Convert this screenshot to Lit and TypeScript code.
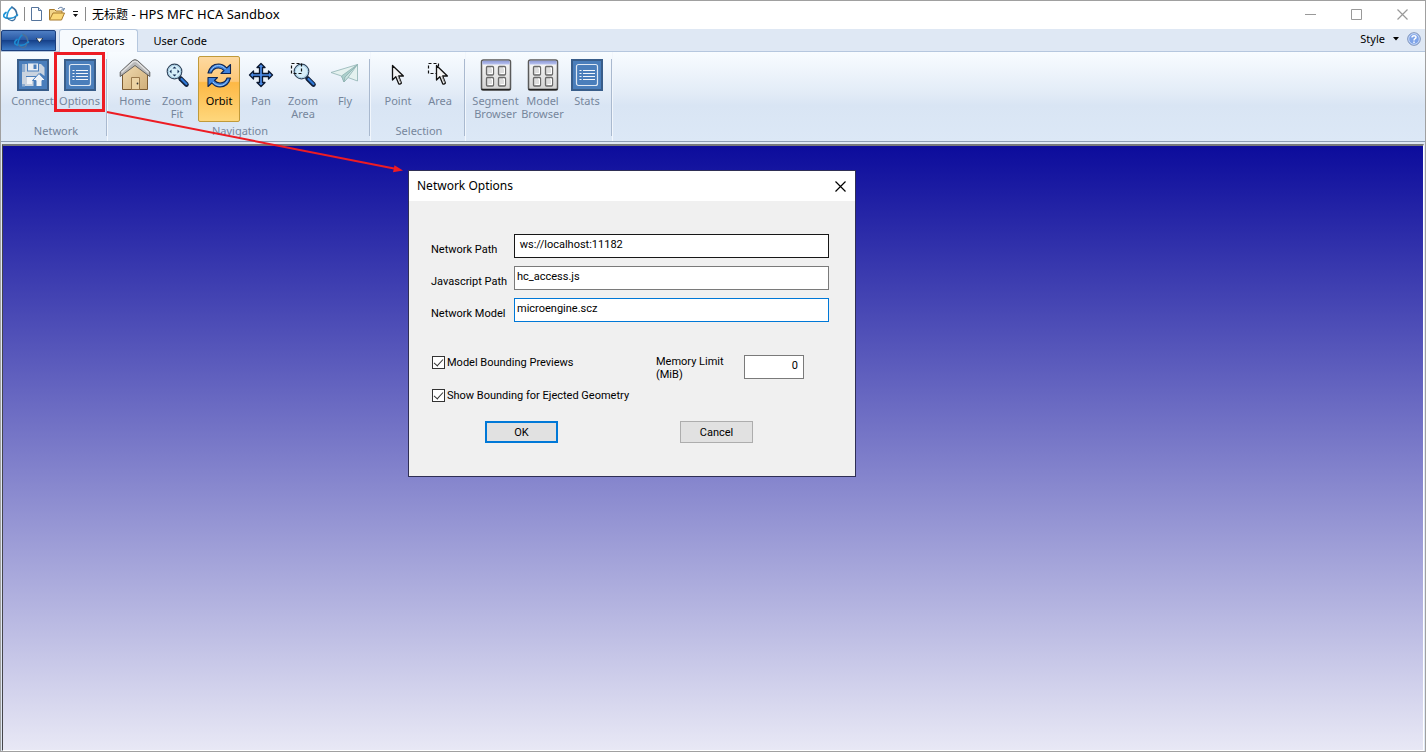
import { LitElement, html, css, svg, nothing } from "lit";
import { customElement, property } from "lit/decorators.js";
import { classMap } from "lit/directives/class-map.js";

const logo = (a: string, b: string) => svg`
  <svg width="16" height="16" viewBox="0 0 16 16" fill="none" stroke-linecap="round">
    <path d="M9 1.200C6.500 3 4.300 6.500 3.800 11.500" stroke=${a} stroke-width="1.500"/>
    <path d="M9 1.200c2.800 1.200 4.800 4.500 5 8.300" stroke=${b} stroke-width="1.700"/>
    <path d="M3 6.500C.8 8 .2 9.800 1.200 11c2 2.300 9.300 2 13.300-2" stroke=${a} stroke-width="1.700"/>
    <path d="M4.500 12c1.200 2 3.500 2.900 5.500 2.500 1.400-.6 2.300-2 2.700-3.700" stroke=${b} stroke-width="1.300"/>
  </svg>`;

const panelFrame = svg`
  <rect x="1" y="1" width="30" height="30" fill="#4a7ebb" stroke="#385d8a" stroke-width="2"/>`;

const listIcon = svg`
  <svg width="32" height="32" viewBox="0 0 32 32">
    ${panelFrame}
    <rect x="5.500" y="5.500" width="21" height="21" rx="2" fill="none" stroke="#dfe8f3" stroke-width="1.200"/>
    <path d="M12 11.500h12M12 14.500h12M12 17.500h12M12 20.500h12" stroke="#f2f6fb" stroke-width="1"/>
    <path d="M8.500 11.500h2M8.500 14.500h2M8.500 17.500h2M8.500 20.500h2" stroke="#f2f6fb" stroke-width="1"/>
  </svg>`;

const browserIcon = svg`
  <svg width="32" height="32" viewBox="0 0 32 32">
    <defs>
      <linearGradient id="wb" x1="0" y1="0" x2="0" y2="1">
        <stop offset="0" stop-color="#fafafa"/><stop offset="1" stop-color="#d2d2d2"/>
      </linearGradient>
      <linearGradient id="wt" x1="0" y1="0" x2="0" y2="1">
        <stop offset="0" stop-color="#8e9ad6"/><stop offset="1" stop-color="#b9c3f0"/>
      </linearGradient>
    </defs>
    <rect x="1.500" y="1" width="29" height="30" rx="2" fill="url(#wb)" stroke="#5a5a5a" stroke-width="1.500"/>
    <path d="M1.500 30.500h29" stroke="#222" stroke-width="1.500"/>
    <path d="M2.300 5.500V3q0-1.300 1.300-1.300h24.800q1.300 0 1.300 1.300v2.500z" fill="url(#wt)"/>
    ${[[6.5, 7.5], [18.5, 7.5], [6.5, 18.5], [18.5, 18.5]].map(
      ([x, y]) => svg`
        <rect x=${x} y=${y} width="7" height="8.500" rx="1" fill="#dedede" stroke="#6a6a6a" stroke-width="1.300"/>
        <path d="M${x + 4.5} ${y + 1.5}h1.500v5.500h-4" stroke="#fff" fill="none"/>`
    )}
  </svg>`;

const lens = svg`
  <path d="M19.500 19.500l6 6" stroke="#10203c" stroke-width="4.600" stroke-linecap="round"/>
  <path d="M20.500 20l5 5" stroke="#2f78d6" stroke-width="2.200" stroke-linecap="round"/>
  <circle cx="13.500" cy="12.500" r="7.300" fill="#d7effa" stroke="#33475e" stroke-width="1.200"/>
  <circle cx="13.500" cy="12.500" r="6.200" fill="none" stroke="#a5cde3" stroke-width="1"/>`;

const pointer = (x: number) => svg`
  <path transform="translate(${x} 6)" d="M.5.5v14.500l3.300-3.200 3 7.200q1.400.6 2.600-.9l-2.800-7.100h4.800z"
    fill="#f4f4f4" stroke="#111" stroke-width="1.300" stroke-linejoin="round"/>
  <path transform="translate(${x} 6)" d="M5.800 11l3 7" stroke="#9a9a9a" stroke-width="1"/>`;

const turn = svg`
  <path d="M5 14C6.500 8.500 10.500 5 15.500 5c3 0 6 1.500 8.200 4l3.800-3.500v9H18l3-3C19.300 9.800 17.500 9 15.500 9 12 9 9.500 11 8.500 14z"
    fill="#3f83de" stroke="#0e2450" stroke-width="1.100" stroke-linejoin="round"/>
  <path d="M8 11.500c1.800-3.300 4.500-5 7.500-5 2.700 0 5.200 1.300 7 3.500" fill="none" stroke="#9ecbf8"/>`;

const icons: Record<string, unknown> = {
  connect: svg`
    <svg width="32" height="32" viewBox="0 0 32 32">
      ${panelFrame}
      <path d="M5 5h19l3.500 3.500V17l-4-3-7 7v6H5z" fill="#c9d3df"/>
      <path d="M5 5h3v8h-3zM5 25h3v2.500H5z" fill="#8fadd0"/>
      <path d="M10 4.500h12v8H10z" fill="#4a7ebb"/>
      <path d="M11 4.500h10v7H11z" fill="#e9eef4"/>
      <path d="M16.500 5.500h3v4.500h-3z" fill="#4a7ebb"/>
      <path d="M9 17h12v1H9z" fill="#4a7ebb"/>
      <path d="M10 18h9l-4 4.500V25h-5z" fill="#f1f3f6"/>
      <path d="M22 14.500l6.500 7H25V27.500h-6v-6h-3.500z" fill="#eef2f7" stroke="#4a7ebb"/>
    </svg>`,
  list: listIcon,
  browser: browserIcon,
  home: svg`
    <svg width="32" height="32" viewBox="0 0 32 32">
      <defs><linearGradient id="hw" x1="0" y1="0" x2="1" y2="1">
        <stop offset="0" stop-color="#f3deb4"/><stop offset="1" stop-color="#cfae79"/>
      </linearGradient></defs>
      <path d="M3.500 13L16 3l12.500 10v17.500h-25z" fill="url(#hw)" stroke="#7c5c33"/>
      <path d="M12.500 18.500h8V30.500h-8z" fill="#ecd3a4" stroke="#9a794b"/>
      <circle cx="18.500" cy="24.500" r=".9" fill="#333"/>
      <path d="M1.200 13L13.500 1.500q2.500-1.700 5 0L30.800 13v4.500L16 6.500 1.200 17.500z" fill="#b9b9b9" stroke="#5f5f5f" stroke-linejoin="round"/>
      <path d="M2.500 13.500L14 3q2-1.300 4 0l11.500 10.500" fill="none" stroke="#e2e2e2" stroke-width="1.400"/>
    </svg>`,
  zoomFit: svg`
    <svg width="32" height="32" viewBox="0 0 32 32">
      ${lens}
      <path d="M13.500 7.500l2 2h-4zM13.500 17.500l2-2h-4zM8.500 12.500l2-2v4zM18.500 12.500l-2-2v4z" fill="#152f55"/>
    </svg>`,
  orbit: svg`
    <svg width="32" height="32" viewBox="0 0 32 32">
      ${turn}
      <g transform="rotate(180 16.250 16.500)">${turn}</g>
    </svg>`,
  pan: svg`
    <svg width="32" height="32" viewBox="0 0 32 32">
      <path d="M16 4.500l4 4h-2.500v6h6V12l4 4-4 4v-2.500h-6v6H20l-4 4-4-4h2.500v-6h-6V20l-4-4 4-4v2.500h6v-6H12z"
        fill="#4a8ae6" stroke="#0b1830" stroke-width="1.300" stroke-linejoin="round"/>
    </svg>`,
  zoomArea: svg`
    <svg width="32" height="32" viewBox="0 0 32 32">
      <g transform="translate(1 0)">${lens}</g>
      <path d="M4.500 4.500h10v10h-10z" fill="none" stroke="#111" stroke-width="1.200" stroke-dasharray="3 2"/>
    </svg>`,
  fly: svg`
    <svg width="32" height="32" viewBox="0 0 32 32" stroke="#8fb3b3" stroke-width=".8" stroke-linejoin="round">
      <path d="M2 13.500L28.500 5.500v16.500L19 18.500l-4 4.500-2.500-6z" fill="#e4f1ef"/>
      <path d="M28.500 5.500L12.500 17l2.500 6 1-5z" fill="#abcfcb"/>
      <path d="M28.500 5.500L16 18l-1 5 4-4.500z" fill="#c9e2df"/>
    </svg>`,
  point: svg`<svg width="32" height="32" viewBox="0 0 32 32">${pointer(10)}</svg>`,
  area: svg`
    <svg width="32" height="32" viewBox="0 0 32 32">
      <path d="M4.500 4.500h10v10h-10z" fill="none" stroke="#111" stroke-width="1.200" stroke-dasharray="3 2"/>
      ${pointer(12)}
    </svg>`,
};

interface Tool { label: string[]; icon: string; active?: boolean }
interface Group { name: string; size: string; tools: Tool[] }

const groups: Group[] = [
  { name: "Network", size: "wide", tools: [
    { label: ["Connect"], icon: "connect" },
    { label: ["Options"], icon: "list" },
  ] },
  { name: "Navigation", size: "narrow", tools: [
    { label: ["Home"], icon: "home" },
    { label: ["Zoom", "Fit"], icon: "zoomFit" },
    { label: ["Orbit"], icon: "orbit", active: true },
    { label: ["Pan"], icon: "pan" },
    { label: ["Zoom", "Area"], icon: "zoomArea" },
    { label: ["Fly"], icon: "fly" },
  ] },
  { name: "Selection", size: "narrow", tools: [
    { label: ["Point"], icon: "point" },
    { label: ["Area"], icon: "area" },
  ] },
  { name: "", size: "wide", tools: [
    { label: ["Segment", "Browser"], icon: "browser" },
    { label: ["Model", "Browser"], icon: "browser" },
    { label: ["Stats"], icon: "list" },
  ] },
];

@customElement("ribbon-group")
class RibbonGroup extends LitElement {
  @property({ attribute: false }) group!: Group;

  static styles = css`
    :host { display: flex; flex-direction: column; padding: 4px 4px 2px 7px;
      background: linear-gradient(#a9b9cf, #a9b9cf) right 7px / 1px 77px no-repeat;
      border-right: 1px solid #f1f6fc; margin-right: -1px; }
    .tools { display: flex; flex: none; height: 66px; margin-bottom: 1px; }
    .tool { width: 42px; padding: 2px 0 0; border: 1px solid transparent; border-radius: 2px; background: none;
      display: flex; flex-direction: column; align-items: center; font: inherit; color: #76869c; }
    .wide .tool { width: 47px; }
    .wide .tool:nth-child(3) { width: 42px; }
    .tool svg { display: block; flex: none; margin-bottom: 3px; }
    .tool.active { color: #000; border-color: #c09a3a;
      background: linear-gradient(#fdd9a0, #fdc878 38%, #fdb845 40%, #fed77c 100%); }
    .name { text-align: center; line-height: 16px; height: 16px; color: #76869c; }
  `;

  render() {
    return html`
      <div class="tools ${this.group.size}">
        ${this.group.tools.map((t) => html`
          <button class=${classMap({ tool: true, active: !!t.active })}>
            ${icons[t.icon]}
            ${t.label.map((line) => html`<span>${line}</span>`)}
          </button>`)}
      </div>
      <div class="name">${this.group.name || nothing}</div>
    `;
  }
}

@customElement("network-options")
class NetworkOptions extends LitElement {
  static styles = css`
    :host { display: block; width: 446px; border: 1px solid #2f2f55; background: #f0f0f0;
      font: 11px/13px Roboto, "Noto Sans", sans-serif; color: #000; }
    * { box-sizing: border-box; }
    .head { height: 30px; padding: 0 8px; background: #fff; display: flex; align-items: center;
      justify-content: space-between; }
    h2 { margin: 0; font: 12px/16px "Noto Sans", sans-serif; }
    button { font: inherit; color: #000; padding: 0; }
    .close { border: 0; background: none; width: 13px; height: 13px; display: flex; align-items: center; justify-content: center; }
    .body { padding: 33px 26px 33px 22px; }
    .fields { display: grid; grid-template-columns: 83px 315px; row-gap: 8px; }
    .fields label { padding-top: 9px; white-space: nowrap; }
    input { font: inherit; color: #000; border-radius: 0; margin: 0; outline: none; }
    .text { height: 24px; width: 100%; border: 1px solid #7a7a7a; background: #fff; padding: 0 3px 4px 2px; }
    .hover { border-color: #171717; }
    .focus { border-color: #0078d7; }
    .limits { display: grid; grid-template-columns: 225px 88px 60px; padding-top: 33px; }
    .checks { display: grid; row-gap: 18px; align-content: start; }
    .check { display: flex; align-items: center; gap: 2px; height: 15px; white-space: nowrap; }
    .check input { appearance: none; width: 13px; height: 13px; border: 1px solid #333; background: #fff;
      display: grid; place-items: center; margin-left: 1px; }
    .check input:checked::after { content: ""; width: 4px; height: 8px; border: solid #333; border-width: 0 1px 1px 0;
      transform: rotate(42deg); margin-bottom: 2px; }
    .number { text-align: right; padding-right: 5px; }
    .actions { display: flex; gap: 122px; padding: 18px 54px 0; }
    .actions button { width: 73px; height: 22px; background: #e1e1e1; border: 1px solid #adadad; }
    .actions .default { border: 2px solid #0078d7; }
  `;

  render() {
    return html`
      <div class="head">
        <h2>Network Options</h2>
        <button class="close" aria-label="Close">
          <svg width="11" height="11" viewBox="0 0 11 11"><path d="M.5.5l10 10M10.500.5l-10 10" stroke="#000" stroke-width="1.200"/></svg>
        </button>
      </div>
      <div class="body">
        <div class="fields">
          <label for="path">Network Path</label>
          <input class="text hover" id="path" .value=${" ws://localhost:11182"}>
          <label for="script">Javascript Path</label>
          <input class="text" id="script" .value=${"hc_access.js"}>
          <label for="model">Network Model</label>
          <input class="text focus" id="model" .value=${"microengine.scz"}>
        </div>
        <div class="limits">
          <div class="checks">
            <label class="check"><input type="checkbox" checked>Model Bounding Previews</label>
            <label class="check"><input type="checkbox" checked>Show Bounding for Ejected Geometry</label>
          </div>
          <label for="limit">Memory Limit<br>(MiB)</label>
          <input class="text number" id="limit" .value=${"0"}>
        </div>
        <div class="actions">
          <button class="default">OK</button>
          <button>Cancel</button>
        </div>
      </div>
    `;
  }
}

@customElement("app-root")
class AppRoot extends LitElement {
  static styles = css`
    :host { display: flex; flex-direction: column; min-height: 100vh; box-sizing: border-box; position: relative;
      border: 1px solid #a0a0a0; background: #dfe8f4; font: 11px/13px "Noto Sans", "Noto Sans CJK SC", sans-serif;
      color: #000; overflow: hidden; }
    * { box-sizing: border-box; }
    svg { display: block; flex: none; }
    button { font: inherit; color: inherit; border: 0; background: none; padding: 0; }
    .title { height: 28px; background: #fff; display: flex; align-items: center; padding: 0 0 2px 2px; }
    .quick { display: flex; align-items: center; gap: 5px; }
    .bar { width: 1px; height: 14px; background: #8a8a8a; }
    h1 { margin: 0 auto 0 6px; font: 13px/16px "Noto Sans", "Noto Sans CJK SC", sans-serif; }
    .han { font-size: 12px; }
    .win { width: 46px; height: 26px; display: grid; place-items: center; }
    .tabs { height: 23px; display: flex; align-items: flex-end; border-bottom: 1px solid #b5c7de; }
    .app { width: 55px; height: 21px; border: 1px solid #1b3f7d; border-radius: 2px 2px 0 0; display: flex; align-items: center;
      justify-content: center; gap: 6px; background: linear-gradient(#4f7fc4, #2a5aa6 45%, #16418a 50%, #3f7cc8); }
    .tab { height: 22px; padding: 0 12px 1px; margin-left: 3px; border: 1px solid transparent; border-bottom: 0;
      border-radius: 3px 3px 0 0; white-space: nowrap; }
    .current { background: #f6fafe; border-color: #b5c7de; margin-bottom: -1px; height: 23px; padding-bottom: 2px; }
    .style { margin-left: auto; height: 22px; display: flex; align-items: center; gap: 8px; padding: 0 4px 3px 0; }
    .ribbon { display: flex; height: 90px; padding-left: 1px; background: linear-gradient(#f8fcff, #e3ecf7 45%, #d9e5f4 60%, #dce8f6);
      border-bottom: 1px solid #8d9db4; }
    .stage { flex: 1; margin: 2px 1px 0; border: 1px solid #45454a; border-top: 2px solid #77797c; position: relative;
      background: linear-gradient(#0c0c9c, #e8e8f5) padding-box; border-bottom-color: #fff; border-right-color: #fff; }
    network-options { position: absolute; left: 405px; top: 24px; box-sizing: border-box; width: 448px; }
    .note { position: absolute; left: 0; top: 0; pointer-events: none; }
  `;

  render() {
    return html`
      <header class="title">
        <div class="quick">
          ${logo("#1f93d6", "#3d6f9f")}
          <span class="bar"></span>
          <button aria-label="New">
            <svg width="13" height="16" viewBox="0 0 13 16"><path d="M1.500 1.500h7l3 3v10h-10z" fill="#fff" stroke="#55749c"/><path d="M8.500 1.500v3h3" fill="#dde6f2" stroke="#55749c"/></svg>
          </button>
          <button aria-label="Open">
            <svg width="18" height="16" viewBox="0 0 18 16"><path d="M1.500 13.500v-10h5l1.500 1.500h6v3" fill="#f3d58a" stroke="#a87a2c"/><path d="M1.500 14l3.500-7h11.500l-3 7z" fill="#fbd878" stroke="#a87a2c"/><path d="M10 3c2-2.500 5-2 5.500.5M16.500 2l-1 2.500-2-1.200" fill="none" stroke="#55749c"/></svg>
          </button>
          <button aria-label="More commands">
            <svg width="9" height="8" viewBox="0 0 9 8"><path d="M2 1h5v1H2zM2 4h5L4.500 7z" fill="#111"/></svg>
          </button>
          <span class="bar"></span>
        </div>
        <h1><span class="han">无标题</span> - HPS MFC HCA Sandbox</h1>
        <button class="win" aria-label="Minimize"><svg width="11" height="11"><path d="M0 5.500h11" stroke="#999"/></svg></button>
        <button class="win" aria-label="Maximize"><svg width="11" height="11"><path d="M.5.5h10v10H.5z" fill="none" stroke="#999"/></svg></button>
        <button class="win" aria-label="Close window"><svg width="11" height="11"><path d="M.5.5l10 10M10.500.5l-10 10" stroke="#999" stroke-width="1.200"/></svg></button>
      </header>
      <nav class="tabs">
        <button class="app" aria-label="Application menu">
          ${logo("#1c8ad0", "#4e7197")}
          <svg width="7" height="5"><path d="M0 0h7L3.500 4.500z" fill="#fff" stroke="#123" stroke-width=".8"/></svg>
        </button>
        <button class="tab current">Operators</button>
        <button class="tab">User Code</button>
        <div class="style">
          <button>Style</button>
          <svg width="6" height="4"><path d="M0 0h6L3 3.500z" fill="#000"/></svg>
          <button aria-label="Help">
            <svg width="14" height="14" viewBox="0 0 14 14"><circle cx="7" cy="7" r="6.300" fill="#7fa4e8" stroke="#8094b8"/><circle cx="7" cy="7" r="5.300" fill="none" stroke="#dbe7fb" stroke-width=".8"/><path d="M5 5.500C5 3 9.200 3.200 9 5.400 8.900 6.800 7 6.600 7 8.400M7 9.600v1.400" fill="none" stroke="#fff" stroke-width="1.400"/></svg>
          </button>
        </div>
      </nav>
      <section class="ribbon">
        ${groups.map((g) => html`<ribbon-group .group=${g}></ribbon-group>`)}
      </section>
      <main class="stage"><network-options></network-options></main>
      <svg class="note" width="420" height="190" viewBox="1 1 420 190">
        <rect x="55.500" y="53.500" width="48" height="57" fill="none" stroke="#ed1c24" stroke-width="3"/>
        <path d="M107 112L394 168.500" stroke="#ed1c24" stroke-width="2"/>
        <path d="M403 170.500l-10 1.800 1.500-7z" fill="#ed1c24"/>
      </svg>
    `;
  }
}
